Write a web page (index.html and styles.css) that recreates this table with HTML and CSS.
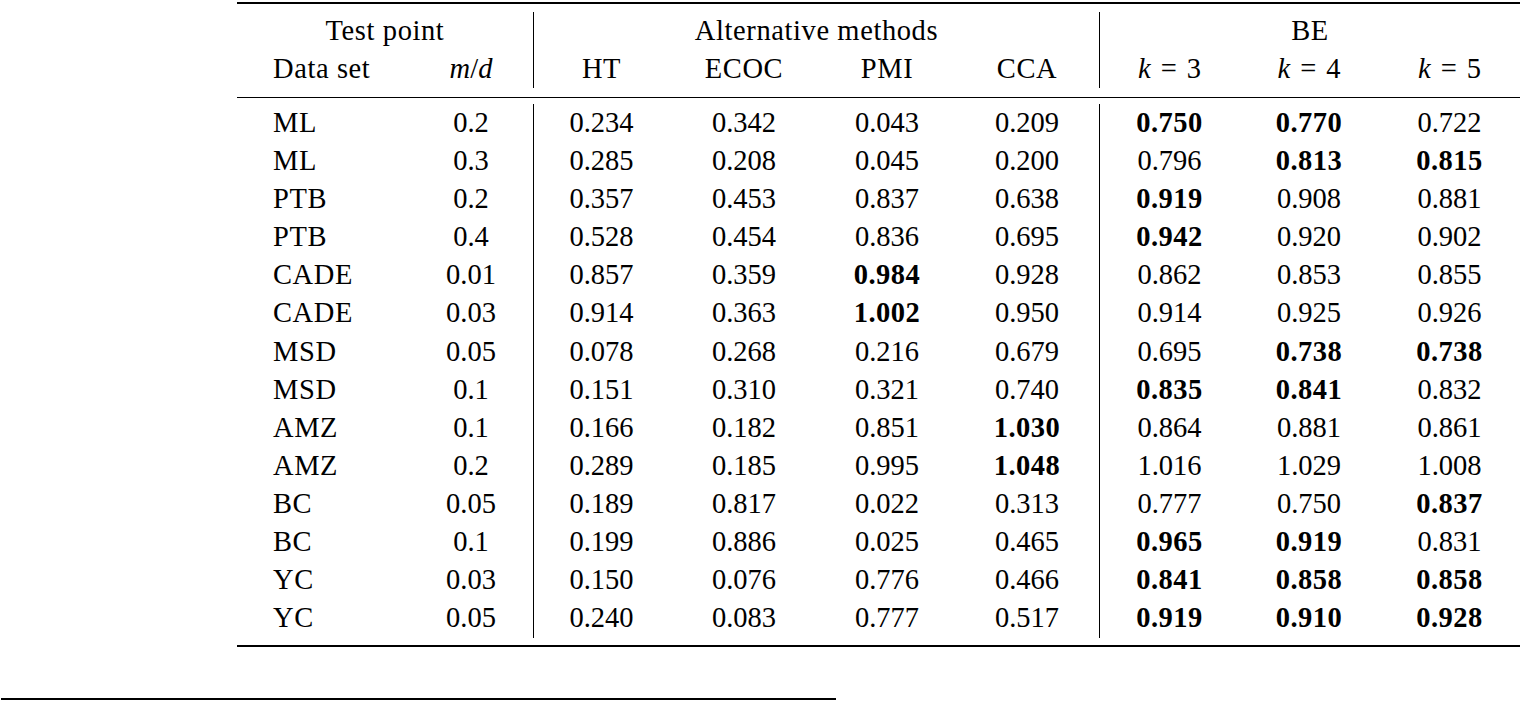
FILE: index.html
```html
<!DOCTYPE html>
<html lang="en">
<head>
<meta charset="utf-8">
<title>Results table</title>
<link rel="stylesheet" href="styles.css">
</head>
<body>
<table class="results">
  <colgroup>
    <col class="c-set">
    <col class="c-md">
    <col class="c-ht">
    <col class="c-ecoc">
    <col class="c-pmi">
    <col class="c-cca">
    <col class="c-k">
    <col class="c-k">
    <col class="c-k5">
  </colgroup>
  <thead>
    <tr class="gap"><td colspan="9" class="gap-top"></td></tr>
    <tr class="row">
      <th colspan="2" class="label">Test point</th>
      <th colspan="4" class="vl label">Alternative methods</th>
      <th colspan="3" class="vl label">BE</th>
    </tr>
    <tr class="row">
      <th class="left label">Data set</th>
      <th><i>m</i>/<i>d</i></th>
      <th class="vl label">HT</th>
      <th class="label">ECOC</th>
      <th class="label">PMI</th>
      <th class="label">CCA</th>
      <th class="vl"><i>k</i><span class="eq">=</span>3</th>
      <th><i>k</i><span class="eq">=</span>4</th>
      <th><i>k</i><span class="eq">=</span>5</th>
    </tr>
    <tr class="gap"><td colspan="9" class="gap-mid"></td></tr>
  </thead>
  <tbody>
    <tr class="gap"><td colspan="9" class="gap-body"></td></tr>
    <tr class="row"><td class="left label">ML</td><td>0.2</td><td class="vl">0.234</td><td>0.342</td><td>0.043</td><td>0.209</td><td class="vl"><b>0.750</b></td><td><b>0.770</b></td><td>0.722</td></tr>
    <tr class="row"><td class="left label">ML</td><td>0.3</td><td class="vl">0.285</td><td>0.208</td><td>0.045</td><td>0.200</td><td class="vl">0.796</td><td><b>0.813</b></td><td><b>0.815</b></td></tr>
    <tr class="row"><td class="left label">PTB</td><td>0.2</td><td class="vl">0.357</td><td>0.453</td><td>0.837</td><td>0.638</td><td class="vl"><b>0.919</b></td><td>0.908</td><td>0.881</td></tr>
    <tr class="row"><td class="left label">PTB</td><td>0.4</td><td class="vl">0.528</td><td>0.454</td><td>0.836</td><td>0.695</td><td class="vl"><b>0.942</b></td><td>0.920</td><td>0.902</td></tr>
    <tr class="row"><td class="left label">CADE</td><td>0.01</td><td class="vl">0.857</td><td>0.359</td><td><b>0.984</b></td><td>0.928</td><td class="vl">0.862</td><td>0.853</td><td>0.855</td></tr>
    <tr class="row"><td class="left label">CADE</td><td>0.03</td><td class="vl">0.914</td><td>0.363</td><td><b>1.002</b></td><td>0.950</td><td class="vl">0.914</td><td>0.925</td><td>0.926</td></tr>
    <tr class="row"><td class="left label">MSD</td><td>0.05</td><td class="vl">0.078</td><td>0.268</td><td>0.216</td><td>0.679</td><td class="vl">0.695</td><td><b>0.738</b></td><td><b>0.738</b></td></tr>
    <tr class="row"><td class="left label">MSD</td><td>0.1</td><td class="vl">0.151</td><td>0.310</td><td>0.321</td><td>0.740</td><td class="vl"><b>0.835</b></td><td><b>0.841</b></td><td>0.832</td></tr>
    <tr class="row"><td class="left label">AMZ</td><td>0.1</td><td class="vl">0.166</td><td>0.182</td><td>0.851</td><td><b>1.030</b></td><td class="vl">0.864</td><td>0.881</td><td>0.861</td></tr>
    <tr class="row"><td class="left label">AMZ</td><td>0.2</td><td class="vl">0.289</td><td>0.185</td><td>0.995</td><td><b>1.048</b></td><td class="vl">1.016</td><td>1.029</td><td>1.008</td></tr>
    <tr class="row"><td class="left label">BC</td><td>0.05</td><td class="vl">0.189</td><td>0.817</td><td>0.022</td><td>0.313</td><td class="vl">0.777</td><td>0.750</td><td><b>0.837</b></td></tr>
    <tr class="row"><td class="left label">BC</td><td>0.1</td><td class="vl">0.199</td><td>0.886</td><td>0.025</td><td>0.465</td><td class="vl"><b>0.965</b></td><td><b>0.919</b></td><td>0.831</td></tr>
    <tr class="row"><td class="left label">YC</td><td>0.03</td><td class="vl">0.150</td><td>0.076</td><td>0.776</td><td>0.466</td><td class="vl"><b>0.841</b></td><td><b>0.858</b></td><td><b>0.858</b></td></tr>
    <tr class="row"><td class="left label">YC</td><td>0.05</td><td class="vl">0.240</td><td>0.083</td><td>0.777</td><td>0.517</td><td class="vl"><b>0.919</b></td><td><b>0.910</b></td><td><b>0.928</b></td></tr>
    <tr class="gap"><td colspan="9" class="gap-end"></td></tr>
  </tbody>
</table>
<div class="footrule"></div>
</body>
</html>
```
FILE: styles.css
```css
html, body {
  margin: 0;
  padding: 0;
  background: #ffffff;
}

body {
  font-family: "Liberation Serif", "DejaVu Serif", serif;
  font-size: 28.5px;
  color: #000000;
}

.results {
  margin: 2px 0 0 237px;
  width: 1283px;
  table-layout: fixed;
  border-collapse: separate;
  border-spacing: 0;
  border-top: 2px solid #000000;
}

.c-set { width: 172px; }
.c-md { width: 124px; }
.c-ht { width: 136px; }
.c-ecoc { width: 150px; }
.c-pmi { width: 136px; }
.c-cca { width: 144px; }
.c-k { width: 140px; }
.c-k5 { width: 141px; }

.results th,
.results td {
  padding: 0;
  text-align: center;
  font-weight: 400;
  line-height: 1;
  white-space: nowrap;
  vertical-align: middle;
}

.results .row > th,
.results .row > td {
  height: 38.1px;
}

.results .left {
  text-align: left;
  padding-left: 36px;
}

.results .label {
  letter-spacing: 0.6px;
}

.results .vl {
  border-left: 1px solid #000000;
}

.results b {
  font-weight: 700;
  letter-spacing: 0.5px;
}

.results i {
  font-style: italic;
}

.eq {
  margin: 0 10px;
}

.gap td {
  padding: 0;
  font-size: 0;
  line-height: 0;
}

.gap-top { height: 8px; }
.gap-mid { height: 9px; border-bottom: 1px solid #000000; }
.gap-body { height: 6px; }
.gap-end { height: 7px; border-bottom: 2px solid #000000; }

.footrule {
  margin: 51px 0 0 1px;
  width: 835px;
  height: 2px;
  background: #000000;
}
```
